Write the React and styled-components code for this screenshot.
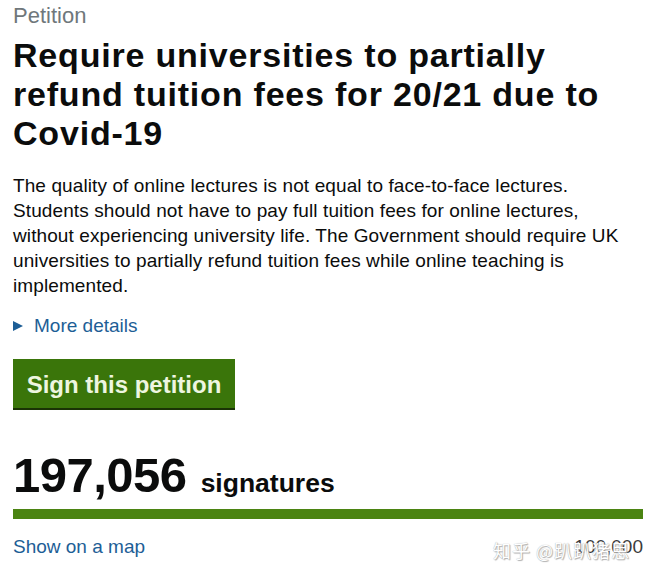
import styled, { createGlobalStyle } from "styled-components";

const GlobalStyle = createGlobalStyle`
  html, body {
    margin: 0;
    padding: 0;
    background: #ffffff;
  }
  body {
    font-family: "Liberation Sans", Arial, sans-serif;
    color: #0b0c0c;
  }
`;

const Page = styled.div`
  position: relative;
  width: 652px;
  height: 581px;
  overflow: hidden;
  padding: 0 9px 0 13px;
  box-sizing: border-box;
`;

const Caption = styled.div`
  font-size: 22px;
  line-height: 26px;
  color: #6f777b;
  padding-top: 3px;
`;

const Heading = styled.h1`
  margin: 7px 0 0;
  width: 600px;
  font-size: 34px;
  line-height: 39px;
  font-weight: 700;
  letter-spacing: 0.8px;
`;

const Summary = styled.p`
  margin: 20px 0 0;
  width: 612px;
  font-size: 19px;
  line-height: 25px;
  letter-spacing: 0.1px;
`;

const Details = styled.div`
  margin-top: 16px;
  display: flex;
  align-items: center;
  gap: 11px;
  font-size: 19px;
  line-height: 24px;
  color: #1d5e96;
`;

const Arrow = styled.span`
  width: 0;
  height: 0;
  border-top: 5.5px solid transparent;
  border-bottom: 5.5px solid transparent;
  border-left: 10px solid #1d5e96;
`;

const SignButton = styled.button`
  margin-top: 21px;
  display: block;
  width: 222px;
  height: 49px;
  border: none;
  border-radius: 0;
  background: #3a750a;
  box-shadow: 0 2px 0 #1a3305;
  color: #eef6e0;
  font-family: inherit;
  font-size: 24px;
  font-weight: 700;
  padding: 2px 0 0;
  text-align: center;
`;

const CountRow = styled.div`
  margin-top: 46px;
  display: flex;
  align-items: baseline;
  gap: 14px;
  line-height: 42px;
`;

const Count = styled.span`
  font-size: 49px;
  font-weight: 700;
  letter-spacing: -0.5px;
`;

const CountLabel = styled.span`
  font-size: 26.5px;
  font-weight: 700;
`;

const Bar = styled.div`
  margin-top: 5px;
  height: 10px;
  background: #dee0e2;
`;

const Fill = styled.div`
  height: 100%;
  background: #4b8412;
`;

const Footer = styled.div`
  margin-top: 16px;
  display: flex;
  justify-content: space-between;
  align-items: baseline;
  font-size: 19px;
  line-height: 24px;
`;

const MapLink = styled.span`
  color: #1d5e96;
`;

const Target = styled.span`
  color: #3b3b3b;
`;

const Watermark = styled.div`
  position: absolute;
  right: 22px;
  bottom: 18px;
  font-family: "Noto Sans CJK SC", sans-serif;
  font-size: 18px;
  line-height: 26px;
  letter-spacing: 1px;
  color: #ffffff;
  text-shadow: 0 0 1px #9a9a9a, 1px 1px 1px #b0b0b0;
  pointer-events: none;
`;

export default function App() {
  const count = 197056;
  const target = 100000;
  const pct = Math.min(100, (count / target) * 100);
  return (
    <>
      <GlobalStyle />
      <Page>
        <Caption>Petition</Caption>
        <Heading>
          Require universities to partially refund tuition fees for 20/21 due to Covid-19
        </Heading>
        <Summary>
          The quality of online lectures is not equal to face-to-face lectures.
          Students should not have to pay full tuition fees for online lectures,
          without experiencing university life. The Government should require UK
          universities to partially refund tuition fees while online teaching is
          implemented.
        </Summary>
        <Details>
          <Arrow />
          More details
        </Details>
        <SignButton>Sign this petition</SignButton>
        <CountRow>
          <Count>197,056</Count>
          <CountLabel>signatures</CountLabel>
        </CountRow>
        <Bar>
          <Fill style={{ width: `${pct}%` }} />
        </Bar>
        <Footer>
          <MapLink>Show on a map</MapLink>
          <Target>100,000</Target>
        </Footer>
        <Watermark>知乎 @趴趴猪思</Watermark>
      </Page>
    </>
  );
}
